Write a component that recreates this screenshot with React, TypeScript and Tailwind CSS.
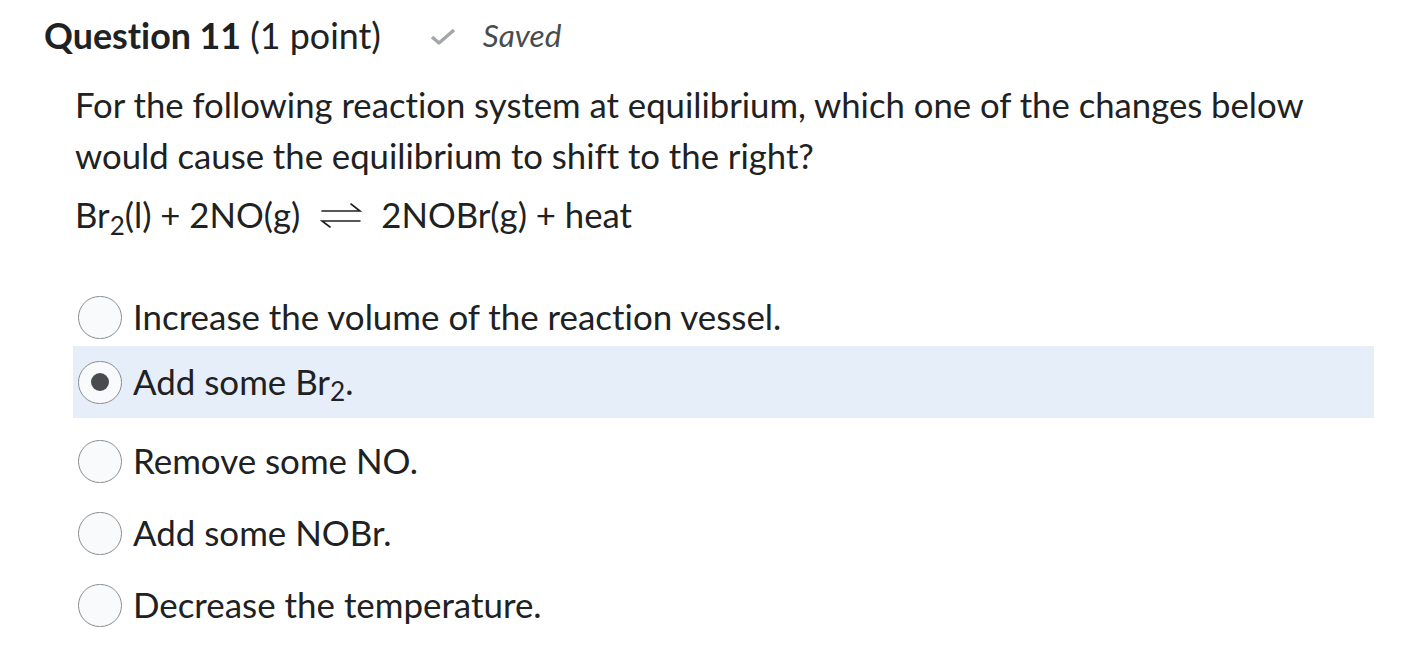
import type { ReactNode } from 'react'

const OPTIONS: { id: string; label: ReactNode }[] = [
  { id: 'a', label: 'Increase the volume of the reaction vessel.' },
  {
    id: 'b',
    label: (
      <>
        Add some Br<sub>2</sub>.
      </>
    ),
  },
  { id: 'c', label: 'Remove some NO.' },
  { id: 'd', label: 'Add some NOBr.' },
  { id: 'e', label: 'Decrease the temperature.' },
]

function EqArrow() {
  return (
    <svg width="42" height="30" viewBox="0 0 42 30" className="ml-[20px] mr-[19px] inline-block align-middle" aria-hidden>
      <g fill="none" stroke="#202122" strokeWidth="1.6" strokeLinecap="round">
        <path d="M2 11 H40 L31 4" />
        <path d="M40 21 H2 L10 27" />
      </g>
    </svg>
  )
}

function Radio({ checked }: { checked: boolean }) {
  return (
    <span className="flex h-[43px] w-[44px] shrink-0 items-center justify-center rounded-full border border-[#8a8d90] bg-[#f9fafb]">
      {checked && <span className="h-[18px] w-[18px] rounded-full bg-[#494c4e]" />}
    </span>
  )
}

function Option({ label, checked, className = '' }: { label: ReactNode; checked: boolean; className?: string }) {
  return (
    <label
      className={`flex items-center gap-[11px] pl-[5px] text-[34.9px] leading-none text-[#202122] ${
        checked ? 'bg-[#e6eefa]' : ''
      } ${className}`}
    >
      <Radio checked={checked} />
      <span>{label}</span>
    </label>
  )
}

export default function App() {
  const selected = 'b'
  return (
    <div className="min-h-[650px] bg-white font-['Lato',sans-serif] text-[#202122] [font-variant-ligatures:none]">
      <div className="pl-[44px] pt-[12px]">
        <div className="flex items-center">
          <h2 className="text-[35.8px] leading-[44px]">
            <span className="font-bold">Question 11</span> (1 point)
          </h2>
          <svg width="26" height="17" viewBox="0 0 26 17" className="ml-[49px] mt-[2px]" aria-hidden>
            <path d="M2 9 L9 15 L24 2" fill="none" stroke="#a3a7ab" strokeWidth="3.4" strokeLinejoin="round" />
          </svg>
          <span className="ml-[27px] text-[31.5px] italic text-[#494c4e]">Saved</span>
        </div>
      </div>

      <div className="pl-[75px] pt-[20px]">
        <p className="max-w-[1280px] text-[34.7px] leading-[51px]">
          For the following reaction system at equilibrium, which one of the changes below would cause the
          equilibrium to shift to the right?
        </p>
        <p className="mt-[9px] flex items-center text-[34.7px] leading-[50px]">
          <span>
            Br<sub>2</sub>(l) + 2NO(g)
          </span>
          <EqArrow />
          <span>2NOBr(g) + heat</span>
        </p>
      </div>

      <div className="ml-[73px] mt-[48px] w-[1301px]">
        {OPTIONS.map((o, i) => (
          <Option
            key={o.id}
            label={o.label}
            checked={o.id === selected}
            className={i === 0 ? 'h-[58px]' : i === 2 ? 'mt-[7px] h-[72px]' : 'h-[72px]'}
          />
        ))}
      </div>
    </div>
  )
}
